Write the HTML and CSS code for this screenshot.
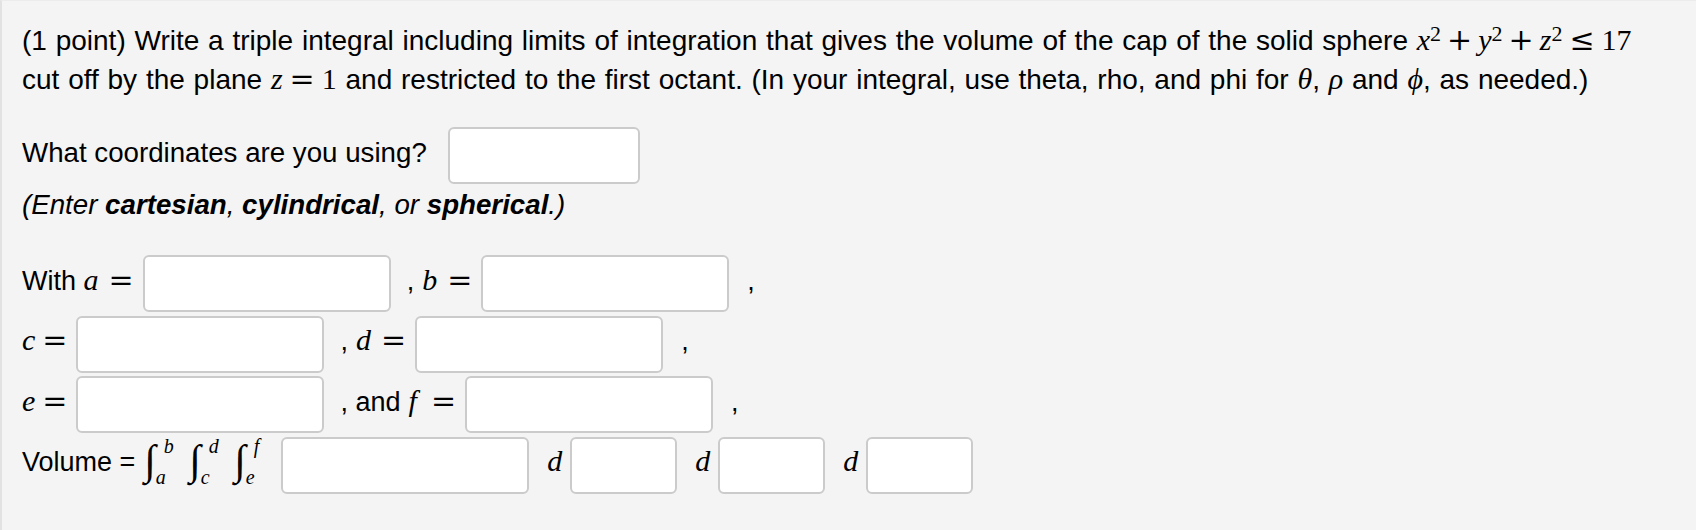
FILE: index.html
```html
<!DOCTYPE html>
<html>
<head>
<meta charset="utf-8">
<title>Triple integral</title>
<link rel="stylesheet" href="styles.css">
</head>
<body>
<div class="problem">
  <p class="intro">(1 point) Write a triple integral including limits of integration that gives the volume of the cap of the solid sphere <span class="m"><i>x</i><sup>2</sup><span class="op">+</span><i>y</i><sup>2</sup><span class="op">+</span><i>z</i><sup>2</sup><span class="rel">≤</span>17</span><br>cut off by the plane <span class="m"><i>z</i><span class="rel">=</span>1</span> and restricted to the first octant. (In your integral, use theta, rho, and phi for <span class="m"><i>θ</i></span>, <span class="m"><i>ρ</i></span> and <span class="m"><i>ϕ</i></span>, as needed.)</p>

  <div class="row coords"><span class="t">What coordinates are you using?</span><input class="ans w192" type="text"></div>
  <p class="hint">(Enter <b>cartesian</b>, <b>cylindrical</b>, or <b>spherical</b>.)</p>

  <div class="rows">
    <div class="row"><span class="t">With </span><span class="m"><i>a</i></span><span class="eq">=</span><input class="ans w248" type="text"><span class="t comma">,</span><span class="m lead"><i>b</i></span><span class="eq">=</span><input class="ans w248" type="text"><span class="t comma end">,</span></div>
    <div class="row"><span class="m"><i>c</i></span><span class="eq tight">=</span><input class="ans w248" type="text"><span class="t comma">,</span><span class="m lead"><i>d</i></span><span class="eq">=</span><input class="ans w248" type="text"><span class="t comma end">,</span></div>
    <div class="row"><span class="m"><i>e</i></span><span class="eq tight">=</span><input class="ans w248" type="text"><span class="t comma">, and</span><span class="m lead"><i>f</i></span><span class="eq wide">=</span><input class="ans w248" type="text"><span class="t comma end">,</span></div>
    <div class="row"><span class="t">Volume =</span><span class="m int first"><span class="sign">∫</span><span class="lims"><span class="up"><i>b</i></span><span class="dn"><i>a</i></span></span></span><span class="m int"><span class="sign">∫</span><span class="lims"><span class="up"><i>d</i></span><span class="dn"><i>c</i></span></span></span><span class="m int last"><span class="sign">∫</span><span class="lims"><span class="up"><i>f</i></span><span class="dn"><i>e</i></span></span></span><input class="ans w248" type="text"><span class="m dvar"><i>d</i></span><input class="ans w107" type="text"><span class="m dvar"><i>d</i></span><input class="ans w107" type="text"><span class="m dvar"><i>d</i></span><input class="ans w107" type="text"></div>
  </div>
</div>
</body>
</html>
```

FILE: styles.css
```css
html, body {
  margin: 0;
  padding: 0;
}

body {
  background: #f4f4f4;
  color: #000;
  font-family: "Liberation Sans", Arial, Helvetica, sans-serif;
  font-size: 27px;
}

.problem {
  box-sizing: border-box;
  min-height: 530px;
  border-left: 2px solid #e2e2e2;
  border-top: 1px solid #ececec;
  padding: 20px 0 0 20px;
}

.intro {
  margin: 0;
  font-size: 28px;
  line-height: 39px;
  white-space: nowrap;
  word-spacing: 1px;
}

.m {
  font-family: "Liberation Serif", "DejaVu Serif", serif;
  font-size: 30px;
  line-height: 1;
  word-spacing: 0;
}

.m i {
  font-style: italic;
}

.m sup {
  font-size: 22px;
  line-height: 0;
  vertical-align: 0.42em;
}

.op {
  font-family: "DejaVu Serif", serif;
  font-size: 30px;
  margin: 0 6px;
}

.rel {
  font-family: "DejaVu Serif", serif;
  font-size: 30px;
  line-height: 0;
  margin: 0 7px;
}

.row {
  display: flex;
  align-items: baseline;
  height: 57px;
  white-space: pre;
}

.coords {
  margin-top: 28px;
  font-size: 27.7px;
}

.coords .t {
  margin-right: 21px;
}

.hint {
  margin: 0;
  font-size: 27.7px;
  line-height: 41px;
  font-style: italic;
}

.rows {
  margin-top: 30px;
  display: flex;
  flex-direction: column;
  gap: 3.5px;
}

.eq {
  font-family: "DejaVu Serif", serif;
  font-size: 30px;
  line-height: 1;
  margin: 0 9px 0 10px;
}

.eq.tight {
  margin-left: 7px;
}

.eq.wide {
  margin-left: 14px;
}

.comma {
  margin-left: 16px;
}

.comma.end {
  margin-left: 18px;
}

.lead {
  margin-left: 8px;
}

.ans {
  box-sizing: border-box;
  flex: none;
  height: 57px;
  margin: 0;
  padding: 0 8px;
  border: 2px solid #cbcbcb;
  border-radius: 6px;
  background: #fff;
  font-family: "Liberation Sans", Arial, sans-serif;
  font-size: 19px;
  outline: none;
}

.w192 { width: 192px; }
.w248 { width: 248px; }
.w107 { width: 107px; }

.int {
  display: inline-flex;
  flex: none;
  align-items: baseline;
  width: 45px;
}

.int.first {
  margin-left: 9px;
}

.int.last {
  width: 47px;
}

.sign {
  font-size: 42px;
  line-height: 0.8;
  font-style: italic;
  position: relative;
  top: 3px;
}

.lims {
  display: inline-flex;
  flex-direction: column;
  font-size: 20px;
  line-height: 31px;
  position: relative;
  top: -18px;
  margin-bottom: -31px;
}

.lims .up {
  margin-left: 8px;
}

.dvar {
  margin: 0 8px 0 18px;
}
```
